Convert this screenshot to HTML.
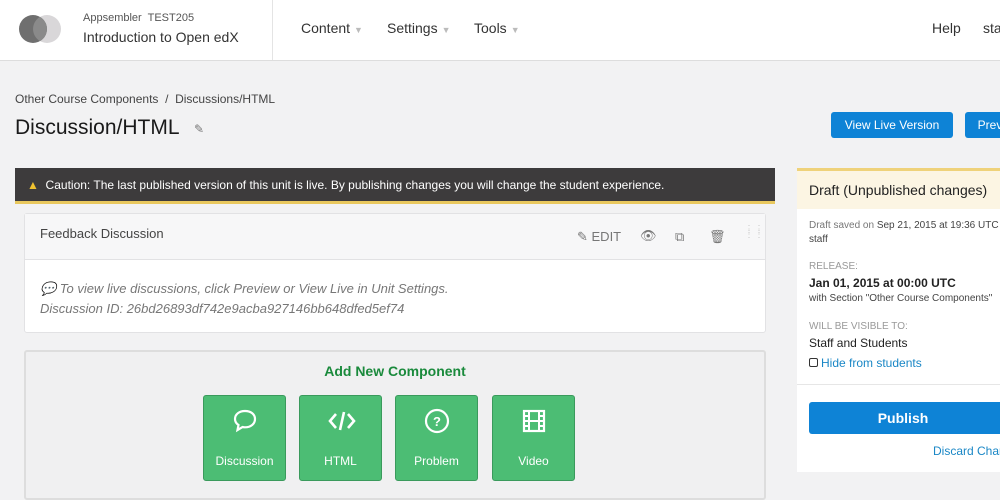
<!DOCTYPE html>
<html><head><style>
*{box-sizing:border-box;margin:0;padding:0}
body{width:1000px;height:490px;overflow:hidden;background:#f2f2f3;font-family:"Liberation Sans",sans-serif;color:#333;position:relative}
.abs{position:absolute}
.hdr{left:0;top:0;width:1000px;height:61px;background:#fff;border-bottom:1px solid #ddd}
.nav{font-size:14px;color:#333;top:20px}
.caret{color:#bbb;font-size:9px;margin-left:4px}
.btn{background:#0e83d6;color:#fff;font-size:12px;border-radius:3px;text-align:center;line-height:26px}
.gb{width:83px;height:86px;top:395px;background:#4cbd74;border:1px solid #3a9a5c;border-radius:3px;color:#fff;font-size:12px;text-align:center}
.gb span{position:absolute;left:0;right:0;top:58px}
.gb svg{position:absolute;left:28px;top:12px}
</style></head><body>
<div class="abs hdr"></div>
<svg class="abs" style="left:17px;top:13px" width="46" height="32"><circle cx="30" cy="16" r="14" fill="#d9d7d9"/><circle cx="16" cy="16" r="14" fill="#6f6f6f"/><path d="M23 3.9A14 14 0 0 1 23 28.1A14 14 0 0 1 23 3.9Z" fill="#8a8a8a"/></svg>
<div class="abs" style="left:83px;top:12px;font-size:11px;color:#555">Appsembler&nbsp; TEST205</div>
<div class="abs" style="left:83px;top:29px;font-size:14px;color:#333">Introduction to Open edX</div>
<div class="abs" style="left:272px;top:0;width:1px;height:60px;background:#e4e4e4"></div>
<div class="abs nav" style="left:301px">Content<span class="caret">▼</span></div>
<div class="abs nav" style="left:387px">Settings<span class="caret">▼</span></div>
<div class="abs nav" style="left:474px">Tools<span class="caret">▼</span></div>
<div class="abs nav" style="left:932px">Help</div>
<div class="abs nav" style="left:983px">sta</div>
<div class="abs" style="left:15px;top:92px;font-size:12px;color:#444">Other Course Components&nbsp; / &nbsp;Discussions/HTML</div>
<div class="abs" style="left:15px;top:116px;font-size:21px;color:#1a1a1a">Discussion/HTML</div>
<div class="abs" style="left:194px;top:122px;font-size:12px;color:#777">✎</div>
<div class="abs btn" style="left:831px;top:112px;width:122px">View Live Version</div>
<div class="abs btn" style="left:965px;top:112px;width:50px">Prev</div>
<div class="abs" style="left:15px;top:168px;width:760px;height:36px;background:#3d3b3c;border-bottom:3px solid #e9c85e;color:#fff;font-size:12px;line-height:34px;padding-left:12px"><span style="color:#f0c230">▲</span>&nbsp; Caution: The last published version of this unit is live. By publishing changes you will change the student experience.</div>
<div class="abs" style="left:24px;top:213px;width:742px;height:120px;background:#fff;border:1px solid #e2e2e4;border-radius:3px"></div>
<div class="abs" style="left:25px;top:214px;width:740px;height:46px;background:#f7f7f8;border-bottom:1px solid #e2e2e4"></div>
<div class="abs" style="left:40px;top:226px;font-size:13px;color:#444">Feedback Discussion</div>
<div class="abs" style="left:577px;top:229px;font-size:13px;color:#777">✎ EDIT</div>
<div class="abs" style="left:640px;top:228px;font-size:13px;color:#777">👁</div>
<div class="abs" style="left:675px;top:229px;font-size:13px;color:#777">⧉</div>
<div class="abs" style="left:709px;top:229px;font-size:13px;color:#777">🗑</div>
<div class="abs" style="left:744px;top:227px;font-size:10px;color:#ccc;line-height:5px">⋮⋮<br>⋮⋮</div>
<div class="abs" style="left:40px;top:279px;font-size:13px;color:#777;font-style:italic;line-height:20px">💬 To view live discussions, click Preview or View Live in Unit Settings.<br>Discussion ID: 26bd26893df742e9acba927146bb648dfed5ef74</div>
<div class="abs" style="left:24px;top:350px;width:742px;height:150px;background:#f0f0f1;border:2px solid #ddd;border-radius:3px"></div>
<div class="abs" style="left:0;width:790px;top:363px;text-align:center;font-size:14px;font-weight:bold;color:#1a8a3c">Add New Component</div>
<div class="abs gb" style="left:203px"><svg width="26" height="26" viewBox="0 0 26 26"><path d="M13 3C7 3 3 6.5 3 11c0 2.5 1.3 4.5 3.5 6l-1 5 5-3c1 .2 1.7.3 2.5.3 6 0 10-3.6 10-8.3S19 3 13 3z" fill="none" stroke="#fff" stroke-width="2.2"/></svg><span>Discussion</span></div>
<div class="abs gb" style="left:299px"><svg width="28" height="26" viewBox="0 0 28 26"><path d="M8 6L2 13l6 7M20 6l6 7-6 7M16 4l-4 18" fill="none" stroke="#fff" stroke-width="2.6"/></svg><span>HTML</span></div>
<div class="abs gb" style="left:395px"><svg width="26" height="26" viewBox="0 0 26 26"><circle cx="13" cy="13" r="11" fill="none" stroke="#fff" stroke-width="2.2"/><text x="13" y="18" font-size="13" font-weight="bold" text-anchor="middle" fill="#fff" font-family="Liberation Sans">?</text></svg><span>Problem</span></div>
<div class="abs gb" style="left:492px"><svg width="26" height="26" viewBox="0 0 26 26"><rect x="3" y="3" width="20" height="20" fill="none" stroke="#fff" stroke-width="2.2"/><path d="M8 3v20M18 3v20M3 13h20M3 8h5M3 18h5M18 8h5M18 18h5" stroke="#fff" stroke-width="2"/></svg><span>Video</span></div>
<div class="abs" style="left:797px;top:168px;width:210px;height:304px;background:#fff;border-top:3px solid #efd27a"></div>
<div class="abs" style="left:797px;top:171px;width:210px;height:38px;background:#fcf5e3"></div>
<div class="abs" style="left:809px;top:182px;font-size:14px;color:#222">Draft (Unpublished changes)</div>
<div class="abs" style="left:809px;top:219px;font-size:10px;color:#777;line-height:14px;white-space:nowrap">Draft saved on <b style="color:#444;font-weight:normal">Sep 21, 2015 at 19:36 UTC</b><br><span style="color:#444">staff</span></div>
<div class="abs" style="left:809px;top:261px;font-size:10px;color:#999">RELEASE:</div>
<div class="abs" style="left:809px;top:276px;font-size:12px;color:#222;font-weight:bold">Jan 01, 2015 at 00:00 UTC</div>
<div class="abs" style="left:809px;top:293px;font-size:10px;color:#444;white-space:nowrap">with Section "Other Course Components"</div>
<div class="abs" style="left:809px;top:321px;font-size:10px;color:#999">WILL BE VISIBLE TO:</div>
<div class="abs" style="left:809px;top:336px;font-size:12px;color:#222">Staff and Students</div>
<div class="abs" style="left:809px;top:356px;font-size:12px;color:#1a87c6"><span style="display:inline-block;width:9px;height:9px;border:1px solid #333;border-radius:2px;margin-right:3px"></span>Hide from students</div>
<div class="abs" style="left:797px;top:384px;width:210px;height:1px;background:#e6e6e6"></div>
<div class="abs btn" style="left:809px;top:402px;width:200px;height:32px;line-height:32px;font-size:14px;font-weight:bold;padding-right:12px">Publish</div>
<div class="abs" style="left:933px;top:444px;font-size:12px;color:#1a87c6;white-space:nowrap">Discard Changes</div>
</body></html>
